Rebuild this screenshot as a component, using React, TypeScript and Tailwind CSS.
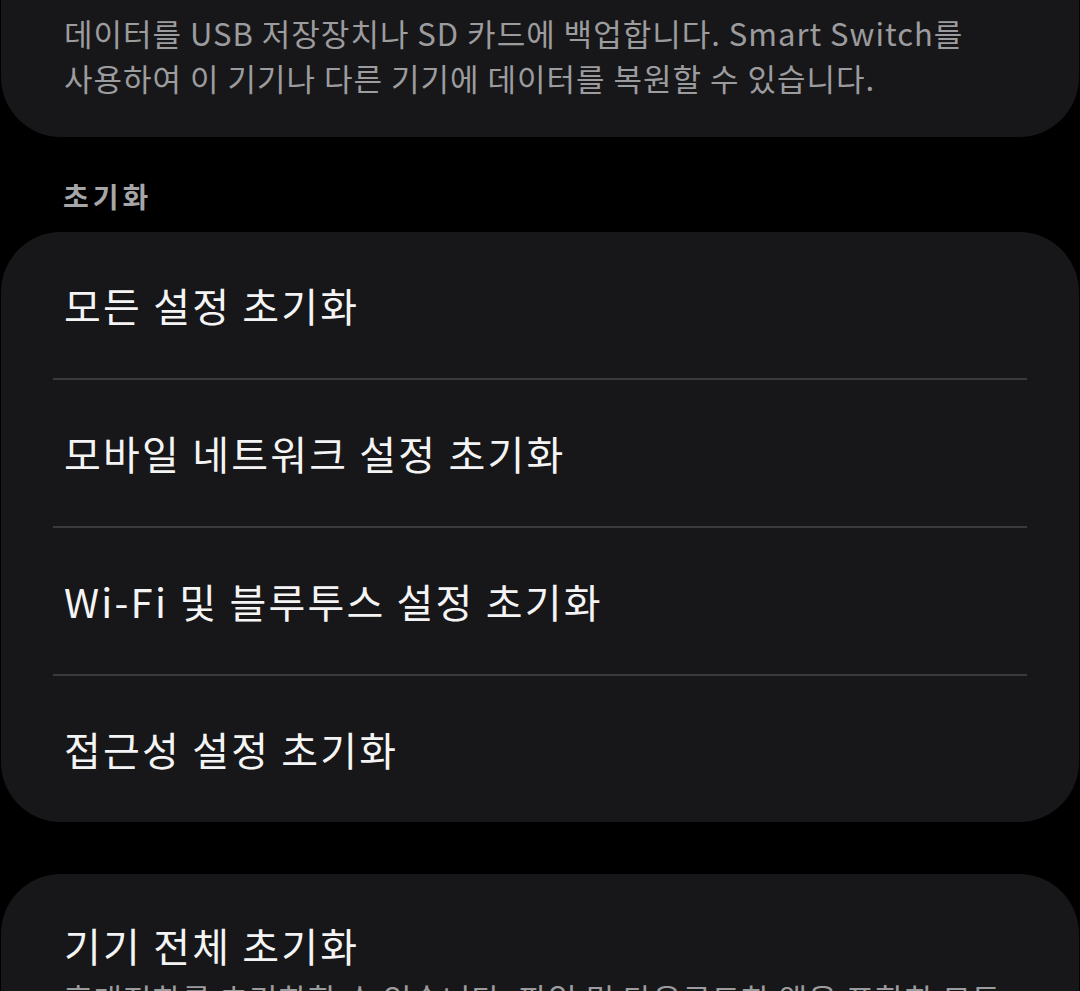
import React from "react";

const font = { fontFamily: '"Noto Sans CJK KR", "Noto Sans", sans-serif' };

function Row({ label }: { label: string }) {
  return (
    <div className="flex h-[146px] items-center px-[63px]">
      <span className="whitespace-nowrap text-[40px] leading-[52px] text-[#f4f4f4] tracking-[2.2px]">{label}</span>
    </div>
  );
}

function Divider() {
  return <div className="mx-[52px] h-[2px] bg-[#3a3a3d]" />;
}

export default function App() {
  const items = ["모든 설정 초기화", "모바일 네트워크 설정 초기화", "Wi-Fi 및 블루투스 설정 초기화", "접근성 설정 초기화"];
  return (
    <div className="h-[991px] w-[1080px] overflow-hidden bg-black" style={font}>
      <div className="mx-[1px] rounded-b-[60px] bg-[#171719] px-[63px] pb-[37px] pt-[10px]">
        <p className="whitespace-nowrap text-[31px] leading-[45px] text-[#9c9c9f] tracking-[1px]">
          데이터를 USB 저장장치나 SD 카드에 백업합니다. Smart Switch를
          <br />
          사용하여 이 기기나 다른 기기에 데이터를 복원할 수 있습니다.
        </p>
      </div>
      <div className="px-[63px] pb-[16px] pt-[39px]">
        <h2 className="text-[28px] font-bold leading-[40px] text-[#a6a6a9] tracking-[4px]">초기화</h2>
      </div>
      <div className="mx-[1px] rounded-[60px] bg-[#171719]">
        {items.map((label, i) => (
          <React.Fragment key={label}>
            {i > 0 && <Divider />}
            <Row label={label} />
          </React.Fragment>
        ))}
      </div>
      <div className="mx-[1px] mt-[52px] rounded-[60px] bg-[#171719] px-[63px] pb-[40px] pt-[45px]">
        <div className="whitespace-nowrap text-[40px] leading-[52px] text-[#f4f4f4] tracking-[2.2px]">기기 전체 초기화</div>
        <p className="mt-[4px] text-[31px] leading-[45px] text-[#9c9c9f] tracking-[1px]">
          휴대전화를 초기화할 수 있습니다. 파일 및 다운로드한 앱을 포함한 모든 데이터가 삭제됩니다.
        </p>
      </div>
    </div>
  );
}
